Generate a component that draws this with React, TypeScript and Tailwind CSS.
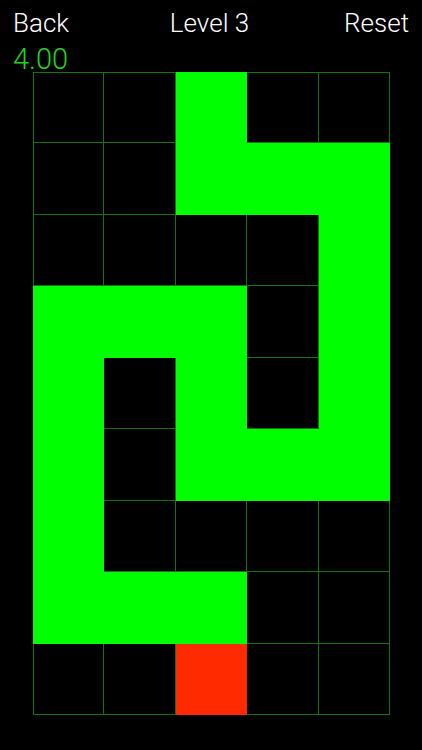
import React from "react";

// 0 = empty, 1 = filled path, 2 = target
const board: number[][] = [
  [0, 0, 1, 0, 0],
  [0, 0, 1, 1, 1],
  [0, 0, 0, 0, 1],
  [1, 1, 1, 0, 1],
  [1, 0, 1, 0, 1],
  [1, 0, 1, 1, 1],
  [1, 0, 0, 0, 0],
  [1, 1, 1, 0, 0],
  [0, 0, 2, 0, 0],
];

function Cell({ v, row, col }: { v: number; row: number; col: number }) {
  const fill =
    v === 1
      ? "bg-[#00ff00] border-[#00ff00]"
      : v === 2
        ? "bg-[#ff2a00] border-[#ff2a00]"
        : "bg-black border-[#127512]";
  return (
    <div
      className={`border-r border-b ${col === 0 ? "border-l" : ""} ${row === 0 ? "border-t" : ""} ${fill}`}
    />
  );
}

export default function App() {
  return (
    <div
      className="w-[422px] h-[750px] bg-black overflow-hidden"
      style={{ fontFamily: "Roboto, 'Liberation Sans', sans-serif" }}
    >
      <div className="flex justify-between px-[13px] pt-[8px] h-[47px] text-white text-[26px] leading-[30px] font-light">
        <span>Back</span>
        <span className="ml-[6px]">Level 3</span>
        <span>Reset</span>
      </div>
      <div className="pl-[13px] h-[25px] text-[#22d322] text-[29px] leading-[25px] font-light">
        4.00
      </div>
      <div className="ml-[33px] w-[357px] h-[643px] grid grid-cols-5 grid-rows-9">
        {board.map((r, i) =>
          r.map((v, j) => <Cell key={`${i}-${j}`} v={v} row={i} col={j} />)
        )}
      </div>
    </div>
  );
}
